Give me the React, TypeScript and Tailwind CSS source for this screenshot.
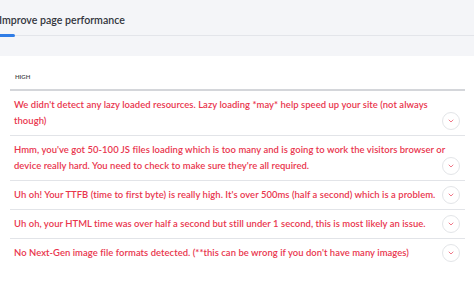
import { ChevronDown } from 'lucide-react';

const items = [
  "We didn't detect any lazy loaded resources. Lazy loading *may* help speed up your site (not always though)",
  "Hmm, you've got 50-100 JS files loading which is too many and is going to work the visitors browser or device really hard. You need to check to make sure they're all required.",
  "Uh oh! Your TTFB (time to first byte) is really high. It's over 500ms (half a second) which is a problem.",
  'Uh oh, your HTML time was over half a second but still under 1 second, this is most likely an issue.',
  "No Next-Gen image file formats detected. (**this can be wrong if you don't have many images)",
];

export default function App() {
  return (
    <div className="w-[474px] h-[282px] bg-white overflow-hidden" style={{ fontFamily: 'Lato, "Open Sans", sans-serif' }}>
      <div className="bg-[#f4f5f8] h-[56px] pt-[11px]">
        <div className="border-b border-[#e3e5ea] h-[25px] relative">
          <h1 className="text-[10.6px] leading-[18px] text-[#33363d] font-semibold -ml-[1px]">Improve page performance</h1>
          <div className="absolute left-0 bottom-[-2px] w-[15px] h-[3px] bg-[#2f7ce6] rounded-r-sm" />
        </div>
      </div>
      <div className="pl-[10px] pr-[9px]">
        <div className="border-b-2 border-[#d4d6da] pt-[17px] pb-[8px] pl-[5px] text-[6px] leading-[8px]">
          <span className="font-semibold text-[#3a3d44] uppercase">High</span>
        </div>
        {items.map((t, i) => (
          <div key={i} className={`relative pl-[4px] pr-[19px] ${i < items.length - 1 ? 'border-b border-[#e2e4e8]' : ''} pt-[6px] pb-[6px]`}>
            <p className="text-[9.45px] leading-[16px] font-semibold text-[#e9354d] tracking-[0.05px]">{t}</p>
            <div className="absolute right-[5px] bottom-[5px] w-[18px] h-[18px] rounded-full border border-[#e3e5e8] bg-white flex items-center justify-center">
              <ChevronDown className="w-[8px] h-[8px] text-[#e9354d]" strokeWidth={2} />
            </div>
          </div>
        ))}
      </div>
    </div>
  );
}
